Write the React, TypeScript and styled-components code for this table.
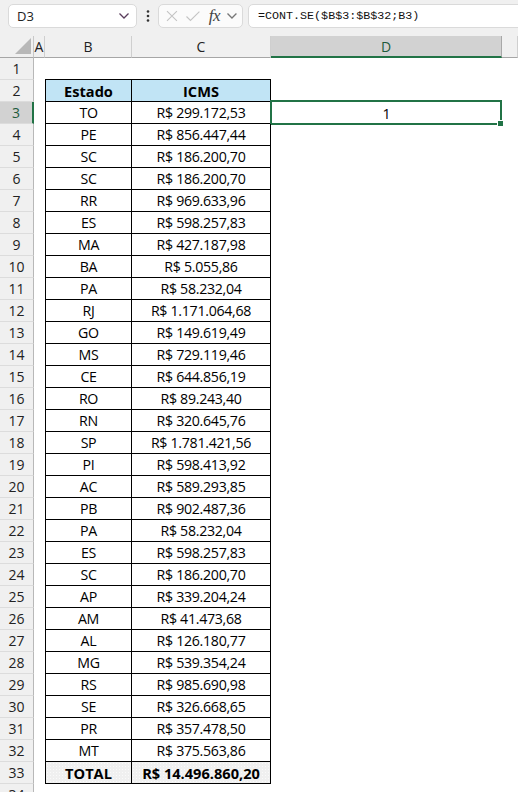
import React from "react";
import styled, { createGlobalStyle, css } from "styled-components";

const GlobalStyle = createGlobalStyle`
  html, body { margin: 0; padding: 0; background: #ffffff; overflow: hidden; }
  #root { width: 518px; height: 792px; overflow: hidden; }
`;

const GREEN = "#217346";

const Page = styled.div`
  width: 518px;
  height: 792px;
  overflow: hidden;
  background: #ffffff;
  font-family: "Open Sans", "Noto Sans", sans-serif;
`;

const Toolbar = styled.div`
  height: 36px;
  box-sizing: border-box;
  padding: 4px 0 0 8px;
  background: #f0f0f0;
  display: flex;
  align-items: flex-start;
  overflow: hidden;
`;

const Box = styled.div`
  height: 24px;
  box-sizing: border-box;
  background: #ffffff;
  border: 1px solid #dadada;
  border-radius: 5px;
  display: flex;
  align-items: center;
`;

const NameBox = styled(Box)`
  width: 129px;
  padding: 0 6px 0 8px;
  justify-content: space-between;
  font-size: 13px;
  color: #222;
`;

const Dots = styled.div`
  width: 21px;
  height: 24px;
  display: flex;
  align-items: center;
  justify-content: center;
`;

const FxBox = styled(Box)`
  width: 85px;
  background: #fbfbfb;
  padding: 0 4px 0 6px;
  gap: 6px;
`;

const FxText = styled.span`
  font-family: "Liberation Serif", "DejaVu Serif", serif;
  font-style: italic;
  font-size: 17px;
  color: #444;
  margin-left: 2px;
  letter-spacing: -0.5px;
`;

const FormulaBox = styled(Box)`
  flex: 1;
  margin-left: 5px;
  margin-right: -10px;
  padding-left: 9px;
  font-family: "Liberation Mono", "DejaVu Sans Mono", monospace;
  font-size: 11.7px;
  color: #111;
`;

const Grid = styled.div`
  display: grid;
  grid-template-columns: 34px 11px 87px 139px 231px 1fr;
  grid-auto-rows: 22px;
`;

const Corner = styled.div`
  background: #f0f0f0;
  border-right: 1px solid #c8c8c8;
  border-bottom: 1px solid #a6a6a6;
  box-sizing: border-box;
  position: relative;
  display: flex;
  align-items: flex-end;
  justify-content: flex-end;
  padding: 0 2px 3px 0;
`;

const ColHead = styled.div<{ $selected?: boolean }>`
  background: #f0f0f0;
  box-sizing: border-box;
  border-right: 1px solid #cfcfcf;
  border-bottom: 1px solid #a6a6a6;
  display: flex;
  align-items: center;
  justify-content: center;
  font-size: 14px;
  color: #222;
  overflow: hidden;
  ${(p) =>
    p.$selected &&
    css`
      background: #d2d2d2;
      border-right-color: #a8a8a8;
      border-bottom: 2px solid ${GREEN};
      color: #1e5b3c;
    `}
`;

const RowHead = styled.div<{ $selected?: boolean }>`
  background: #f0f0f0;
  box-sizing: border-box;
  border-right: 1px solid #b8b8b8;
  border-bottom: 1px solid #dcdcdc;
  display: flex;
  align-items: center;
  justify-content: center;
  font-size: 14px;
  color: #222;
  ${(p) =>
    p.$selected &&
    css`
      background: #d2d2d2;
      border-right: 2px solid ${GREEN};
      color: #1e5b3c;
    `}
`;

type CellKind = "plain" | "top" | "head" | "body" | "total";

const Cell = styled.div<{ $kind?: CellKind; $left?: boolean }>`
  box-sizing: border-box;
  display: flex;
  align-items: center;
  justify-content: center;
  font-family: "Open Sans", "Noto Sans", sans-serif;
  font-size: 14.2px;
  letter-spacing: -0.3px;
  color: #000;
  white-space: nowrap;
  position: relative;
  ${(p) =>
    p.$kind === "top" &&
    css`
      border-bottom: 1px solid #000;
    `}
  ${(p) =>
    (p.$kind === "head" || p.$kind === "body" || p.$kind === "total") &&
    css`
      border-bottom: 1px solid #000;
      border-right: 1px solid #000;
      border-left: ${p.$left ? "1px solid #000" : "none"};
    `}
  ${(p) =>
    p.$kind === "head" &&
    css`
      background: #c1e4f5;
      font-weight: 700;
      font-size: 14.6px;
      letter-spacing: 0;
    `}
  ${(p) =>
    p.$kind === "total" &&
    css`
      font-weight: 700;
      font-size: 14.6px;
      letter-spacing: 0;
      background-color: #f0f0f0;
      background-image: radial-gradient(#fafafa 0.6px, transparent 0.8px);
      background-size: 3px 3px;
    `}
`;

const Selection = styled.div`
  position: absolute;
  left: -1px;
  top: -2px;
  right: 0;
  bottom: -1px;
  border: 2px solid ${GREEN};
  pointer-events: none;
`;

const Handle = styled.div`
  position: absolute;
  right: -4px;
  bottom: -4px;
  width: 5px;
  height: 5px;
  background: ${GREEN};
  border: 1px solid #ffffff;
`;

const data: [string, string][] = [
  ["TO", "R$ 299.172,53"],
  ["PE", "R$ 856.447,44"],
  ["SC", "R$ 186.200,70"],
  ["SC", "R$ 186.200,70"],
  ["RR", "R$ 969.633,96"],
  ["ES", "R$ 598.257,83"],
  ["MA", "R$ 427.187,98"],
  ["BA", "R$ 5.055,86"],
  ["PA", "R$ 58.232,04"],
  ["RJ", "R$ 1.171.064,68"],
  ["GO", "R$ 149.619,49"],
  ["MS", "R$ 729.119,46"],
  ["CE", "R$ 644.856,19"],
  ["RO", "R$ 89.243,40"],
  ["RN", "R$ 320.645,76"],
  ["SP", "R$ 1.781.421,56"],
  ["PI", "R$ 598.413,92"],
  ["AC", "R$ 589.293,85"],
  ["PB", "R$ 902.487,36"],
  ["PA", "R$ 58.232,04"],
  ["ES", "R$ 598.257,83"],
  ["SC", "R$ 186.200,70"],
  ["AP", "R$ 339.204,24"],
  ["AM", "R$ 41.473,68"],
  ["AL", "R$ 126.180,77"],
  ["MG", "R$ 539.354,24"],
  ["RS", "R$ 985.690,98"],
  ["SE", "R$ 326.668,65"],
  ["PR", "R$ 357.478,50"],
  ["MT", "R$ 375.563,86"],
];

const Chevron = ({ color = "#555" }: { color?: string }) => (
  <svg width="12" height="8" viewBox="0 0 12 8">
    <path d="M1.5 1.5 L6 6 L10.5 1.5" fill="none" stroke={color} strokeWidth="1.3" />
  </svg>
);

type Row = { n: number; b?: React.ReactNode; c?: React.ReactNode; kind?: CellKind; d?: React.ReactNode; sel?: boolean };

export default function App() {
  const rows: Row[] = [
    { n: 1, kind: "top" },
    { n: 2, b: "Estado", c: "ICMS", kind: "head" },
    ...data.map(([s, v], i) => ({ n: i + 3, b: s, c: v, kind: "body" as CellKind, d: i === 0 ? "1" : undefined, sel: i === 0 })),
    { n: 33, b: "TOTAL", c: "R$ 14.496.860,20", kind: "total" },
    { n: 34 },
  ];

  return (
    <Page>
      <GlobalStyle />
      <Toolbar>
        <NameBox>
          <span>D3</span>
          <Chevron color="#5a3d5c" />
        </NameBox>
        <Dots>
          <svg width="4" height="14" viewBox="0 0 4 14">
            <circle cx="2" cy="2.5" r="1.3" fill="#333" />
            <circle cx="2" cy="7" r="1.3" fill="#333" />
            <circle cx="2" cy="11.5" r="1.3" fill="#333" />
          </svg>
        </Dots>
        <FxBox>
          <svg width="14" height="14" viewBox="0 0 14 14">
            <path d="M2 2 L12 12 M12 2 L2 12" stroke="#c4c4c4" strokeWidth="1.1" fill="none" />
          </svg>
          <svg width="16" height="14" viewBox="0 0 16 14">
            <path d="M1.5 7.5 L5.5 11.5 L14.5 2.5" stroke="#c4c4c4" strokeWidth="1.1" fill="none" />
          </svg>
          <FxText>fx</FxText>
          <Chevron color="#777" />
        </FxBox>
        <FormulaBox>=CONT.SE($B$3:$B$32;B3)</FormulaBox>
      </Toolbar>
      <Grid>
        <Corner>
          <svg width="16" height="16" viewBox="0 0 16 16">
            <path d="M16 0 L16 16 L0 16 Z" fill="#b8b8b8" />
          </svg>
        </Corner>
        <ColHead>A</ColHead>
        <ColHead>B</ColHead>
        <ColHead>C</ColHead>
        <ColHead $selected>D</ColHead>
        <ColHead />
        {rows.map((r) => (
          <React.Fragment key={r.n}>
            <RowHead $selected={r.sel}>{r.n}</RowHead>
            <Cell />
            <Cell $kind={r.kind} $left>{r.b}</Cell>
            <Cell $kind={r.kind}>{r.c}</Cell>
            <Cell>
              {r.d}
              {r.sel && (
                <Selection>
                  <Handle />
                </Selection>
              )}
            </Cell>
            <Cell />
          </React.Fragment>
        ))}
      </Grid>
    </Page>
  );
}
